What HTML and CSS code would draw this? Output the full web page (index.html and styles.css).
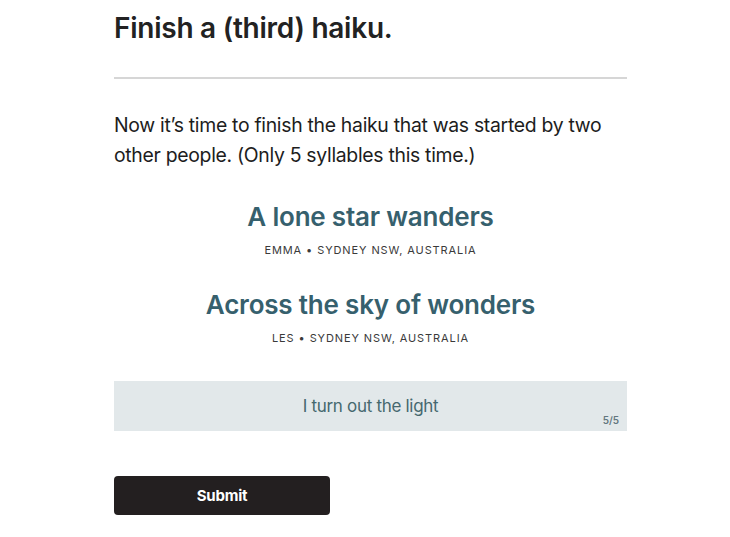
FILE: index.html
```html
<!DOCTYPE html>
<html lang="en">
<head>
<meta charset="utf-8">
<title>Finish a (third) haiku.</title>
<link rel="stylesheet" href="styles.css">
</head>
<body>
<main class="page">
  <h1 class="title">Finish a (third) haiku.</h1>
  <hr class="divider">
  <p class="intro">Now it’s time to finish the haiku that was started by two other people. (Only 5 syllables this time.)</p>
  <section class="lines">
    <div class="line">
      <h2 class="line-text">A lone star wanders</h2>
      <p class="line-meta">EMMA • SYDNEY NSW, AUSTRALIA</p>
    </div>
    <div class="line">
      <h2 class="line-text">Across the sky of wonders</h2>
      <p class="line-meta">LES • SYDNEY NSW, AUSTRALIA</p>
    </div>
  </section>
  <div class="field">
    <span class="field-text">I turn out the light</span>
    <span class="counter">5/5</span>
  </div>
  <button class="submit" type="button">Submit</button>
</main>
</body>
</html>
```
FILE: styles.css
```css
html, body {
  margin: 0;
  padding: 0;
  background: #ffffff;
}
body {
  font-family: Inter, "Liberation Sans", sans-serif;
  color: #222222;
}
.page {
  width: 513px;
  margin-left: 114px;
  display: flex;
  flex-direction: column;
}
.title {
  margin: 0;
  padding-top: 10px;
  font-size: 28px;
  line-height: 36px;
  font-weight: 600;
  letter-spacing: -0.25px;
  color: #222222;
}
.divider {
  margin: 31px 0 0 0;
  border: 0;
  height: 2px;
  background: #d6d6d6;
}
.intro {
  margin: 31px 0 0 0;
  font-size: 19.4px;
  line-height: 30px;
  letter-spacing: -0.3px;
  color: #1d1d1d;
}
.lines {
  display: flex;
  flex-direction: column;
  align-items: center;
  gap: 31px;
  margin-top: 30px;
}
.line {
  display: flex;
  flex-direction: column;
  align-items: center;
}
.line-text {
  margin: 0;
  font-size: 26px;
  line-height: 34px;
  font-weight: 600;
  letter-spacing: -0.2px;
  color: #36606d;
}
.line-meta {
  margin: 9px 0 0 0;
  font-size: 11px;
  line-height: 14px;
  letter-spacing: 0.9px;
  color: #3a3a3a;
}
.field {
  margin-top: 36px;
  height: 50px;
  background: #e2e8ea;
  display: flex;
  align-items: center;
  justify-content: center;
  position: relative;
}
.field-text {
  font-size: 17px;
  letter-spacing: -0.3px;
  color: #46686f;
}
.counter {
  position: absolute;
  right: 8px;
  bottom: 5px;
  font-size: 10px;
  font-weight: 600;
  color: #62777f;
}
.submit {
  margin-top: 45px;
  width: 216px;
  height: 39px;
  border: 0;
  border-radius: 4px;
  background: #231f20;
  color: #ffffff;
  font-family: Inter, "Liberation Sans", sans-serif;
  font-size: 15px;
  font-weight: 700;
  letter-spacing: -0.2px;
  cursor: pointer;
}
```
